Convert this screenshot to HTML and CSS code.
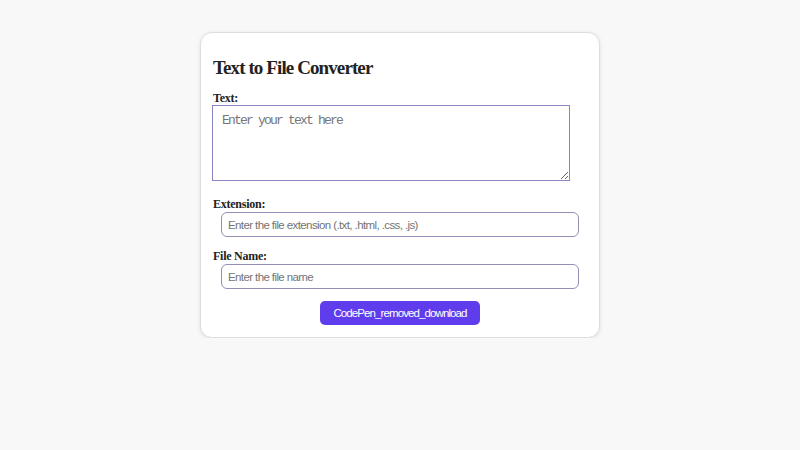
FILE: index.html
```html
<!DOCTYPE html>
<html lang="en">
<head>
<meta charset="utf-8">
<title>Text to File Converter</title>
<link rel="stylesheet" href="styles.css">
</head>
<body>
<main class="card">
  <h1 class="title">Text to File Converter</h1>
  <label class="label" for="text">Text:</label>
  <textarea id="text" class="textarea" placeholder="Enter your text here"></textarea>
  <label class="label label-ext" for="ext">Extension:</label>
  <input id="ext" class="field" type="text" placeholder="Enter the file extension (.txt, .html, .css, .js)">
  <label class="label label-name" for="name">File Name:</label>
  <input id="name" class="field" type="text" placeholder="Enter the file name">
  <div class="actions">
    <button class="button" type="button">CodePen_removed_download</button>
  </div>
</main>
</body>
</html>
```

FILE: styles.css
```css
html, body {
  margin: 0;
  padding: 0;
  background: #f8f8f8;
}
body {
  padding-top: 32px;
  font-family: "Liberation Serif", serif;
  color: #222;
}
.card {
  box-sizing: border-box;
  width: 400px;
  margin: 0 auto;
  background: #fff;
  border: 1px solid #dedede;
  border-radius: 12px;
  box-shadow: 0 1px 4px rgba(0,0,0,0.10);
  padding: 23px 12px 12px 12px;
}
.title {
  margin: 0;
  font-size: 19px;
  line-height: 24px;
  letter-spacing: -0.9px;
  font-weight: bold;
  color: #222;
}
.label {
  display: block;
  margin-top: 11px;
  font-size: 12px;
  line-height: 14px;
  letter-spacing: -0.25px;
  font-weight: bold;
  color: #222;
}
.label-ext { margin-top: 16px; margin-bottom: 1px; }
.label-name { margin-top: 12px; margin-bottom: 1px; }
.textarea {
  display: block;
  box-sizing: border-box;
  width: 358px;
  height: 76px;
  margin: 0 0 0 -1px;
  padding: 7px 9px;
  border: 1px solid #8a84c4;
  border-radius: 0;
  font-family: "Liberation Mono", monospace;
  font-size: 13px;
  letter-spacing: -1.8px;
  color: #333;
  resize: vertical;
  background: #fff;
}
.textarea::placeholder { color: #777; }
.field {
  display: block;
  box-sizing: border-box;
  width: 358px;
  height: 25px;
  margin: 0 0 0 8px;
  padding: 0 6px;
  border: 1px solid #948fb4;
  border-radius: 6px;
  font-family: "Liberation Sans", sans-serif;
  font-size: 11.5px;
  letter-spacing: -0.6px;
  color: #333;
  background: #fff;
}
.field::placeholder { color: #747474; }
.actions {
  display: flex;
  justify-content: center;
  margin-top: 12px;
}
.button {
  width: 160px;
  height: 24px;
  border: none;
  border-radius: 5px;
  background: #5f3dec;
  color: #fff;
  font-family: "Liberation Sans", sans-serif;
  font-size: 11.5px;
  letter-spacing: -0.9px;
  padding: 0;
}
```
